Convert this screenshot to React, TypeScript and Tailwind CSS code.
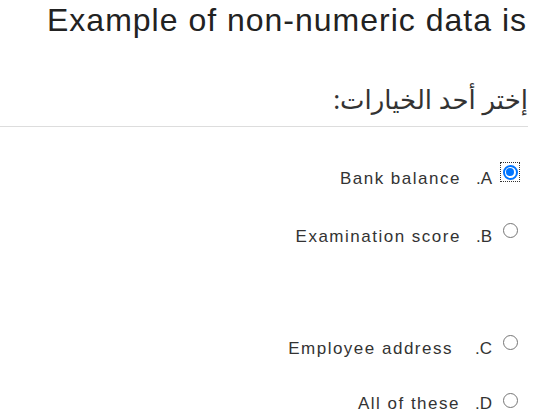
const options = [
  { key: 'A', label: 'Bank balance', checked: true },
  { key: 'B', label: 'Examination score', checked: false },
  { key: 'C', label: 'Employee address', checked: false, gap: true, pad: true },
  { key: 'D', label: 'All of these', checked: false, up: true },
];

export default function App() {
  return (
    <div dir="rtl" className="w-[540px] h-[420px] overflow-hidden bg-white text-[#333] font-['Liberation_Sans',Arial,sans-serif]">
      <h1 className="pr-[13px] pt-[2px] text-[32px] leading-[36px] tracking-[1px] text-[#222] whitespace-nowrap">
        Example of non-numeric data is
      </h1>
      <p className="mt-[42px] pr-[12px] text-[26px] leading-[38px] text-[#333] font-['Noto_Sans','DejaVu_Sans',sans-serif]">
        إختر أحد الخيارات:
      </p>
      <hr className="mt-[8px] mr-[12px] border-t border-[#ddd]" />
      <div className="pt-[36px] pr-[21px] flex flex-col">
        {options.map((o) => (
          <div
            key={o.key}
            className={`flex items-start h-[58px] ${o.gap ? 'mt-[54px]' : ''}`}
          >
            <span
              className={`flex items-center justify-center w-[18px] h-[18px] ${o.checked ? 'outline-1 outline-dotted outline-[#333]' : ''}`}
            >
              <span
                className={`w-[15px] h-[15px] rounded-full ${o.checked ? 'border-2 border-[#0075ff] bg-white' : 'border border-[#767676]'} flex items-center justify-center`}
              >
                {o.checked && <span className="w-[8px] h-[8px] rounded-full bg-[#0075ff]" />}
              </span>
            </span>
            <span className={`mr-[9px] ${o.up ? 'mt-[-1px]' : 'mt-[2px]'} text-[17px] leading-[28px] text-[#333]`}>{o.key}.</span>
            <span className={`${o.pad ? 'mr-[22px]' : 'mr-[15px]'} ${o.up ? 'mt-[-1px]' : 'mt-[2px]'} text-[17px] leading-[28px] tracking-[1.5px] text-[#333] whitespace-nowrap`}>
              {o.label}
            </span>
          </div>
        ))}
      </div>
    </div>
  );
}
